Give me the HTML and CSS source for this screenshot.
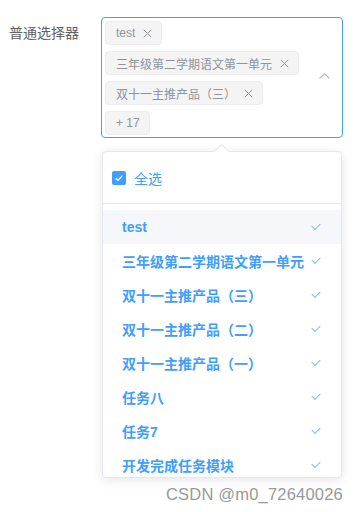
FILE: index.html
```html
<!DOCTYPE html>
<html lang="zh-CN">
<head>
    <meta charset="UTF-8">
    <title>普通选择器</title>
    <link rel="stylesheet" href="styles.css">
</head>
<body>
  <div class="form-row">
    <label class="label">普通选择器</label>
    <div class="field">
      <div class="select">
        <div class="tags">
          <span class="tag">test<svg class="close" width="9" height="9" viewBox="0 0 9 9"><path d="M0.8,0.8 L8.2,8.2 M8.2,0.8 L0.8,8.2" stroke="#909399" stroke-width="1"/></svg></span>
          <span class="tag">三年级第二学期语文第一单元<svg class="close" width="9" height="9" viewBox="0 0 9 9"><path d="M0.8,0.8 L8.2,8.2 M8.2,0.8 L0.8,8.2" stroke="#909399" stroke-width="1"/></svg></span>
          <span class="tag">双十一主推产品（三）<svg class="close" width="9" height="9" viewBox="0 0 9 9"><path d="M0.8,0.8 L8.2,8.2 M8.2,0.8 L0.8,8.2" stroke="#909399" stroke-width="1"/></svg></span>
          <span class="tag">+ 17</span>
        </div>
        <svg class="arrow" width="11" height="6" viewBox="0 0 11 6">
          <polyline points="0.5,5.5 5.5,0.8 10.5,5.5" fill="none" stroke="#b4b7bd" stroke-width="1.1"/>
        </svg>
      </div>

      <div class="dropdown">
        <span class="pointer"></span>
        <div class="check-all">
          <span class="checkbox">
            <svg width="14" height="14" viewBox="0 0 14 14">
              <polyline points="3.6,7.2 6,9.4 10.4,4.6" fill="none" stroke="#fff" stroke-width="1.3"/>
            </svg>
          </span>
          <span class="check-text">全选</span>
        </div>
        <ul class="options">
          <li class="option hover">test<i class="tick"></i></li>
          <li class="option">三年级第二学期语文第一单元<i class="tick"></i></li>
          <li class="option">双十一主推产品（三）<i class="tick"></i></li>
          <li class="option">双十一主推产品（二）<i class="tick"></i></li>
          <li class="option">双十一主推产品（一）<i class="tick"></i></li>
          <li class="option">任务八<i class="tick"></i></li>
          <li class="option">任务7<i class="tick"></i></li>
          <li class="option">开发完成任务模块<i class="tick"></i></li>
        </ul>
      </div>
    </div>
  </div>

  <div class="watermark">CSDN @m0_72640026</div>
</body>
</html>
```

FILE: styles.css
```css
body {
	margin: 0;
	width: 358px;
	height: 512px;
	position: relative;
	overflow: hidden;
	background: #fff;
	font-family: "Liberation Sans", "Noto Sans CJK SC", sans-serif;
}
.form-row {
	display: flex;
	padding-top: 17px;
	padding-left: 9px;
}
.label {
	width: 92px;
	font-size: 14px;
	line-height: 32px;
	color: #606266;
}
.field {
	width: 241px;
}
.select {
	display: flex;
	align-items: center;
	width: 237px;
	padding: 3px 0 2px 3px;
	border: 1px solid #409eff;
	border-radius: 4px;
}
.tags {
	flex: 1;
	display: flex;
	flex-direction: column;
	align-items: flex-start;
	gap: 6px;
}
.tag {
	display: flex;
	align-items: center;
	height: 22px;
	padding: 0 9px 0 10px;
	background: #f4f4f5;
	border: 1px solid #ececee;
	border-radius: 4px;
	font-size: 12px;
	color: #909399;
}
.close {
	margin-left: 8px;
}
.arrow {
	margin-right: 12px;
	margin-top: -4px;
}
.dropdown {
	position: relative;
	margin-top: 13px;
	margin-left: 1px;
	width: 238px;
	height: 325px;
	border: 1px solid #e4e7ed;
	border-radius: 4px;
	background: #fff;
	box-shadow: 0 2px 12px rgba(0, 0, 0, 0.1);
}
.pointer {
	position: absolute;
	top: -6px;
	left: 113px;
	width: 10px;
	height: 10px;
	background: #fff;
	border-left: 1px solid #e4e7ed;
	border-top: 1px solid #e4e7ed;
	transform: rotate(45deg);
}
.check-all {
	display: flex;
	align-items: center;
	height: 51px;
	padding-left: 9px;
	border-bottom: 1px solid #e4e7ed;
	position: relative;
}
.checkbox {
	display: flex;
	width: 14px;
	height: 14px;
	background: #409eff;
	border-radius: 2px;
}
.check-text {
	margin-left: 8px;
	font-size: 14px;
	color: #409eff;
}
.options {
	list-style: none;
	margin: 0;
	padding: 6px 0 0;
	height: 267px;
	overflow: hidden;
}
.option {
	display: flex;
	align-items: center;
	justify-content: space-between;
	height: 34px;
	padding: 0 20px 0 19px;
	font-size: 14px;
	font-weight: bold;
	color: #409eff;
}
.option.hover {
	background: #f5f7fa;
}
.tick {
	width: 7px;
	height: 4px;
	border-left: 1px solid #79b8ff;
	border-bottom: 1px solid #79b8ff;
	transform: rotate(-45deg);
	margin-top: -3px;
	margin-right: 1px;
}
.watermark {
	position: absolute;
	right: 15px;
	top: 485px;
	font-size: 16.5px;
	color: #999;
	letter-spacing: 0.2px;
	text-shadow: 0 0 2px #fff;
}
```
